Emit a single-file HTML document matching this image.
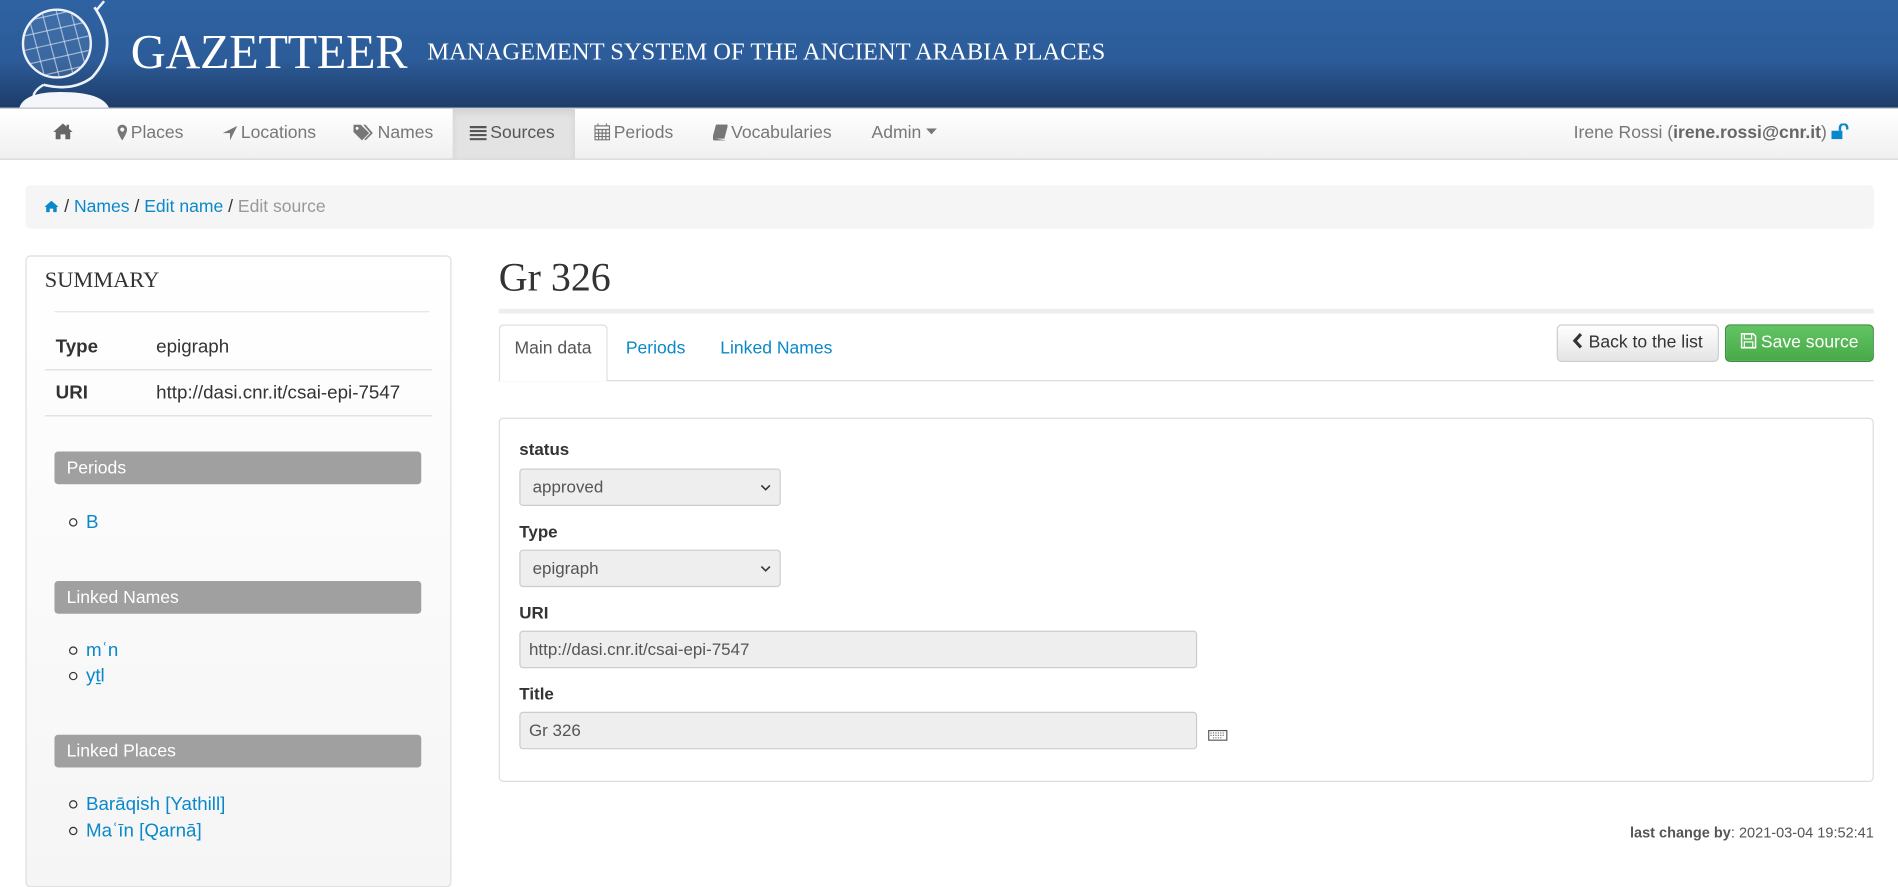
<!DOCTYPE html>
<html><head><meta charset="utf-8">
<style>
html,body{margin:0;padding:0;width:1898px;height:850px;overflow:hidden;background:#fff}
#w{position:absolute;left:0;top:0;width:1568px;height:702px;transform:scale(1.2105);transform-origin:0 0;font-family:"Liberation Sans",Arial,sans-serif;font-size:14px;color:#333}
.a{position:absolute}
.hdr{left:0;top:0;width:1568px;height:89px;background:linear-gradient(#2f62a2 0%,#2c5c99 55%,#1e3c68 100%)}
.nav{left:0;top:89px;width:1568px;height:41px;background:linear-gradient(#fff,#f0f0f0);border-bottom:1px solid #d4d4d4;border-top:1px solid #ccc}
.ni{position:absolute;top:0;height:41px;line-height:41px;color:#777;font-size:14.5px}
.ni svg{vertical-align:-2px;margin-right:3px}
.lnk{color:#0a88c9}
.hd{position:absolute;left:45px;width:303px;height:27px;background:#a0a0a0;border-radius:3px;color:#fff;line-height:28px;font-size:14.5px}
.hd span{margin-left:10px}
.li{position:absolute;left:57px;color:#0a88c9;font-size:15.5px;line-height:18px}
.li:before{content:"";position:absolute;left:0;top:5px;width:5px;height:5px;border:1px solid #333;border-radius:50%}
.li span{margin-left:14px}
.lab{position:absolute;left:429px;font-weight:bold;font-size:14px;color:#333}
.inp{position:absolute;left:429px;background:#eee;border:1px solid #ccc;border-radius:3px;box-sizing:border-box;height:31px;line-height:29px;color:#555;font-size:14px;padding-left:10px}
</style></head><body><div id="w">
<div class="a hdr"></div>
<svg class="a" style="left:0;top:0" width="100" height="89" viewBox="0 0 100 89">
<defs><clipPath id="c"><circle cx="47" cy="36" r="27"/></clipPath></defs>
<circle cx="47" cy="36" r="28" fill="rgba(255,255,255,0.08)" stroke="#eef3fb" stroke-width="2"/>
<g clip-path="url(#c)" stroke="rgba(230,238,250,0.6)" stroke-width="1" fill="none">
<path d="M10 20 L85 3 M10 32 L85 15 M10 44 L85 27 M10 56 L85 39 M10 68 L85 51"/>
<path d="M20 0 L40 75 M32 0 L52 75 M44 0 L64 75 M56 0 L76 75"/>
</g>
<path d="M78 6 Q100 38 76 64 Q60 76 36 70" stroke="#eef3fb" stroke-width="2.2" fill="none"/>
<path d="M86 1 L80 8" stroke="#eef3fb" stroke-width="2"/>
<path d="M36 70 Q26 76 28 82" stroke="#eef3fb" stroke-width="2" fill="none"/>
<path d="M16 89 Q20 76 50 76 Q84 76 90 89 Z" fill="#f4f6fa"/>
</svg>
<div class="a" style="left:108px;top:19px;font-family:'Liberation Serif',serif;font-size:40px;color:#fff;letter-spacing:-0.3px">GAZETTEER</div>
<div class="a" style="left:353px;top:32px;font-family:'Liberation Serif',serif;font-size:20.3px;color:#fff">MANAGEMENT SYSTEM OF THE ANCIENT ARABIA PLACES</div>

<div class="a nav">
<div class="ni" style="left:43px"><svg width="18" height="15" viewBox="0 0 18 15"><path d="M9 1 L1 8 L3 8 L3 14 L7 14 L7 10 L11 10 L11 14 L15 14 L15 8 L17 8 Z" fill="#666"/><rect x="12" y="2" width="2" height="4" fill="#666"/></svg></div>
<div class="ni" style="left:97px"><svg width="8" height="13" viewBox="0 0 8 13"><path d="M4 0 A4 4 0 0 1 8 4 C8 7 4 13 4 13 C4 13 0 7 0 4 A4 4 0 0 1 4 0Z M4 2.3 A1.7 1.7 0 1 0 4 5.7 A1.7 1.7 0 1 0 4 2.3Z" fill="#777" fill-rule="evenodd"/></svg>Places</div>
<div class="ni" style="left:184px"><svg width="12" height="12" viewBox="0 0 12 12"><path d="M12 0 L0 6 L6 6 L6 12 Z" fill="#777"/></svg>Locations</div>
<div class="ni" style="left:292px"><svg width="17" height="13" viewBox="0 0 17 13"><path d="M0 0 L6 0 L13 7 L7 13 L0 6Z" fill="#777"/><path d="M8 0 L10 0 L16 7 L10 13 L9 12 L14 7Z" fill="#777"/><circle cx="3" cy="3" r="1.2" fill="#fff"/></svg>Names</div>
<div class="ni" style="left:374px;width:101px;background:#e3e3e3;box-shadow:inset 0 3px 6px rgba(0,0,0,.08);color:#555"><span style="margin-left:14px"><svg width="14" height="12" viewBox="0 0 14 12"><path d="M0 1h14M0 4.3h14M0 7.6h14M0 11h14" stroke="#555" stroke-width="1.8"/></svg>Sources</span></div>
<div class="ni" style="left:491px"><svg width="13" height="14" viewBox="0 0 13 14"><rect x="0.5" y="2" width="12" height="11.5" fill="none" stroke="#777"/><path d="M0 5h13M3 2v-2M10 2v-2M0 8h13M0 10.8h13M3.5 5v9M6.5 5v9M9.5 5v9" stroke="#777"/></svg>Periods</div>
<div class="ni" style="left:589px"><svg width="12" height="13" viewBox="0 0 12 13"><path d="M3 0 L12 0 L9 11 L0 11 Z M0 11 L1 13 L10 13" fill="#777" stroke="#777"/></svg>Vocabularies</div>
<div class="ni" style="left:720px">Admin <svg width="9" height="6" viewBox="0 0 9 6" style="vertical-align:2px"><path d="M0 0 L9 0 L4.5 5Z" fill="#777"/></svg></div>
<div class="ni" style="left:1300px">Irene Rossi (<b style="color:#666">irene.rossi@cnr.it</b>) <svg width="15" height="13" viewBox="0 0 15 13" style="vertical-align:-1px"><rect x="0" y="6" width="9" height="7" fill="#0a88c9"/><path d="M7 6 V3.5 A3 3 0 0 1 13 3.5 V5" stroke="#0a88c9" stroke-width="2" fill="none"/></svg></div>
</div>

<div class="a" style="left:21px;top:153px;width:1527px;height:36px;background:#f5f5f5;border-radius:4px"></div>
<div class="a" style="left:36px;top:163px;font-size:14.5px;color:#333"><svg width="13" height="11" viewBox="0 0 18 15" style="vertical-align:-1px"><path d="M9 1 L1 8 L3 8 L3 14 L7 14 L7 10 L11 10 L11 14 L15 14 L15 8 L17 8 Z" fill="#0a88c9"/></svg> / <span class="lnk">Names</span> / <span class="lnk">Edit name</span> / <span style="color:#999">Edit source</span></div>

<div class="a" style="left:21px;top:211px;width:350px;height:520px;border:1px solid #ddd;border-radius:4px;background:linear-gradient(#fff,#f5f5f5)"></div>
<div class="a" style="left:37px;top:222px;font-family:'Liberation Serif',serif;font-size:18.5px;color:#333">SUMMARY</div>
<div class="a" style="left:45px;top:257px;width:310px;height:1px;background:#e5e5e5"></div>
<div class="a" style="left:46px;top:278px;font-weight:bold;font-size:15.5px">Type</div>
<div class="a" style="left:129px;top:278px;font-size:15.5px">epigraph</div>
<div class="a" style="left:37px;top:305px;width:320px;height:1px;background:#ddd"></div>
<div class="a" style="left:46px;top:316px;font-weight:bold;font-size:15.5px">URI</div>
<div class="a" style="left:129px;top:316px;font-size:15.5px">http://dasi.cnr.it/csai-epi-7547</div>
<div class="a" style="left:37px;top:343px;width:320px;height:1px;background:#ddd"></div>

<div class="hd" style="top:373px"><span>Periods</span></div>
<div class="li" style="top:423px"><span>B</span></div>
<div class="hd" style="top:480px"><span>Linked Names</span></div>
<div class="li" style="top:529px"><span>mʿn</span></div>
<div class="li" style="top:550px"><span>yṯl</span></div>
<div class="hd" style="top:607px"><span>Linked Places</span></div>
<div class="li" style="top:656px"><span>Barāqish [Yathill]</span></div>
<div class="li" style="top:678px"><span>Maʿīn [Qarnā]</span></div>

<div class="a" style="left:412px;top:212px;font-family:'Liberation Serif',serif;font-size:33px;color:#333">Gr 326</div>
<div class="a" style="left:412px;top:255px;width:1136px;height:4px;background:#eee"></div>
<div class="a" style="left:412px;top:314px;width:1136px;height:1px;background:#ddd"></div>
<div class="a" style="left:412px;top:268px;width:90px;height:47px;border:1px solid #ddd;border-bottom:none;border-radius:4px 4px 0 0;background:#fff;box-sizing:border-box"></div>
<div class="a" style="left:425px;top:280px;font-size:14.5px;color:#555">Main data</div>
<div class="a lnk" style="left:517px;top:280px;font-size:14.5px">Periods</div>
<div class="a lnk" style="left:595px;top:280px;font-size:14.5px">Linked Names</div>
<div class="a" style="left:1286px;top:268px;width:134px;height:31px;box-sizing:border-box;border:1px solid #ccc;border-radius:4px;background:linear-gradient(#fff,#e4e4e4);line-height:29px;font-size:14.5px;color:#333;text-align:center"><svg width="9" height="13" viewBox="0 0 9 13" style="vertical-align:-1px"><path d="M7 1 L2 6.5 L7 12" stroke="#333" stroke-width="2.6" fill="none"/></svg> Back to the list</div>
<div class="a" style="left:1425px;top:268px;width:123px;height:31px;box-sizing:border-box;border:1px solid #3e8f3e;border-radius:4px;background:linear-gradient(#62c462,#48a948);line-height:29px;font-size:14.5px;color:#fff;text-align:center"><svg width="13" height="13" viewBox="0 0 13 13" style="vertical-align:-1px"><path d="M0.7 0.7h9.5l2.1 2.1v9.5h-11.6z" fill="none" stroke="#fff" stroke-width="1.3"/><rect x="3" y="1" width="6" height="4" fill="none" stroke="#fff"/><rect x="3" y="7.5" width="7" height="4.5" fill="none" stroke="#fff"/></svg> Save source</div>

<div class="a" style="left:412px;top:345px;width:1136px;height:301px;box-sizing:border-box;border:1px solid #ddd;border-radius:4px"></div>
<div class="lab" style="top:363px">status</div>
<div class="inp" style="top:387px;width:216px">approved<svg class="a" style="right:7px;top:12px" width="9" height="6" viewBox="0 0 9 6"><path d="M1 1 L4.5 4.5 L8 1" stroke="#333" stroke-width="1.3" fill="none"/></svg></div>
<div class="lab" style="top:431px">Type</div>
<div class="inp" style="top:454px;width:216px">epigraph<svg class="a" style="right:7px;top:12px" width="9" height="6" viewBox="0 0 9 6"><path d="M1 1 L4.5 4.5 L8 1" stroke="#333" stroke-width="1.3" fill="none"/></svg></div>
<div class="lab" style="top:498px">URI</div>
<div class="inp" style="top:521px;width:560px;padding-left:7px">http://dasi.cnr.it/csai-epi-7547</div>
<div class="lab" style="top:565px">Title</div>
<div class="inp" style="top:588px;width:560px;padding-left:7px">Gr 326</div>
<svg class="a" style="left:998px;top:603px" width="16" height="9" viewBox="0 0 16 9"><rect x="0.5" y="0.5" width="15" height="8" fill="none" stroke="#555"/><path d="M2 2.5h12M2 4.5h12M4 6.5h8" stroke="#777" stroke-dasharray="1 1"/></svg>

<div class="a" style="right:20px;top:681px;font-size:12px;color:#555"><b>last change by</b>: 2021-03-04 19:52:41</div>
</div></body></html>
